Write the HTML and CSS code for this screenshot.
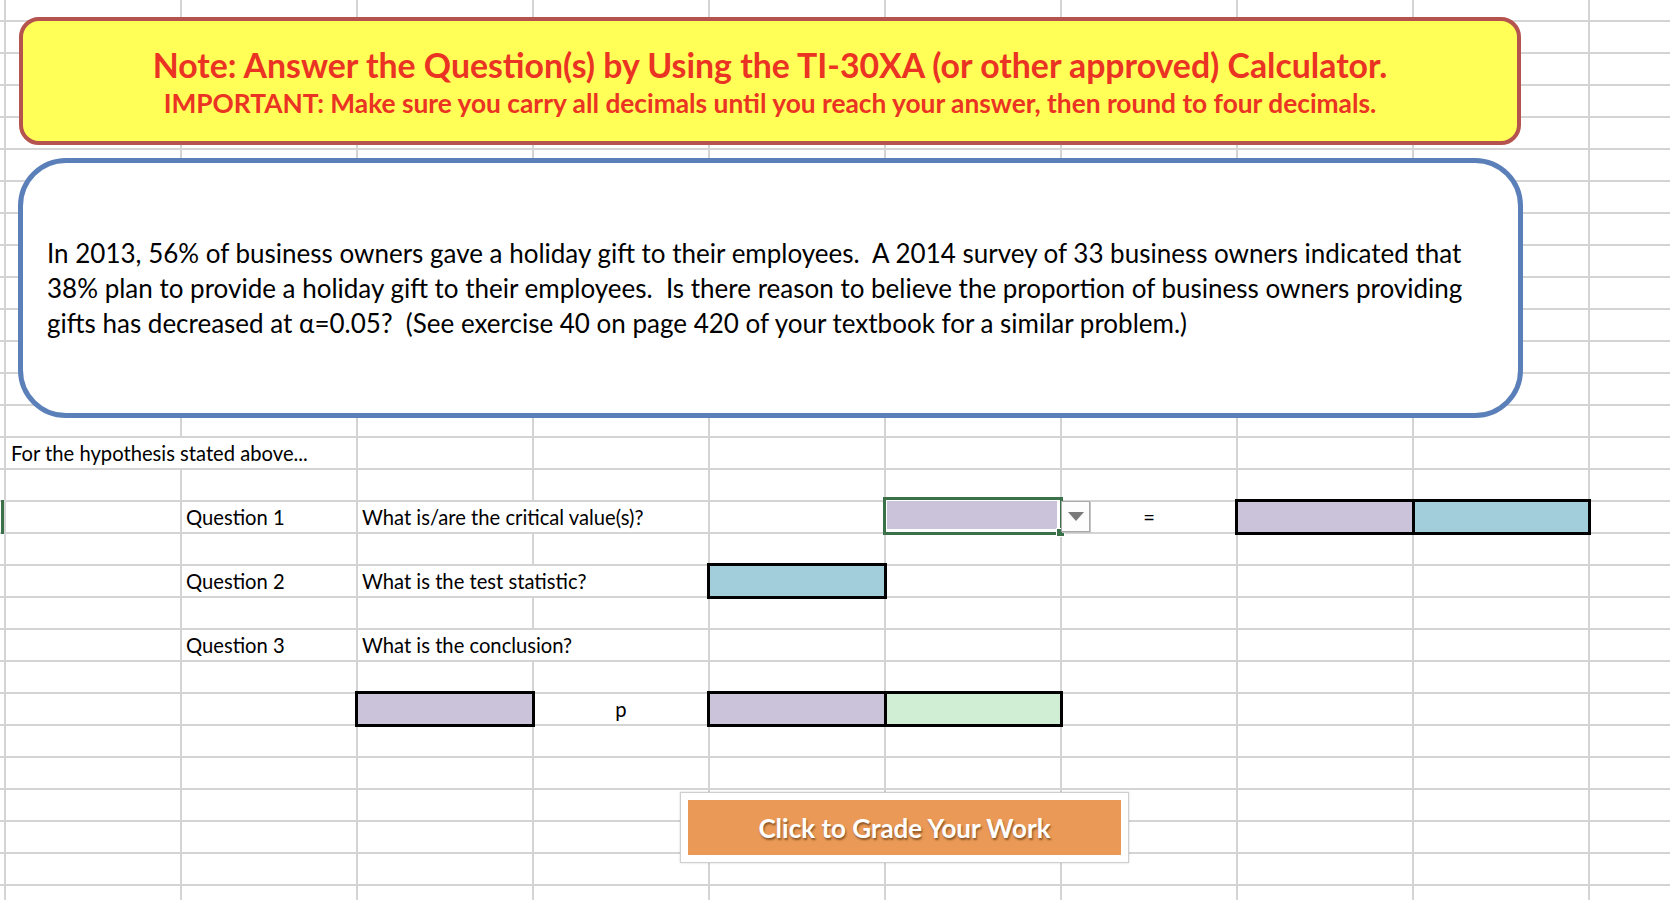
FILE: index.html
```html
<!DOCTYPE html>
<html lang="en">
<head>
<meta charset="utf-8">
<title>Hypothesis Test Worksheet</title>
<link rel="stylesheet" href="styles.css">
</head>
<body>
<div class="sheet">
  <div class="cells">
    <div class="cell wide r14 c1">For the hypothesis stated above...</div>

    <div class="cell r16 c2">Question 1</div>
    <div class="cell wide r16 c3">What is/are the critical value(s)?</div>
    <div class="selected r16 c6">
      <div class="fill purple"></div>
      <div class="handle"></div>
      <div class="dropdown"><span class="arrow"></span></div>
    </div>
    <div class="cell center r16 c7">=</div>
    <div class="boxed pair r16 c8">
      <div class="part purple"></div>
      <div class="part blue"></div>
    </div>

    <div class="cell r18 c2">Question 2</div>
    <div class="cell wide r18 c3">What is the test statistic?</div>
    <div class="boxed blue r18 c5"></div>

    <div class="cell r20 c2">Question 3</div>
    <div class="cell wide r20 c3">What is the conclusion?</div>

    <div class="boxed purple r22 c3"></div>
    <div class="cell center r22 c4">p</div>
    <div class="boxed pair r22 c5">
      <div class="part purple"></div>
      <div class="part green"></div>
    </div>
  </div>

  <div class="row-marker"></div>

  <div class="note">
    <p class="note-title">Note: Answer the Question(s) by Using the TI-30XA (or other approved) Calculator.</p>
    <p class="note-sub">IMPORTANT: Make sure you carry all decimals until you reach your answer, then round to four decimals.</p>
  </div>

  <div class="problem">
    <p>In 2013, 56% of business owners gave a holiday gift to their employees.&nbsp; A 2014 survey of 33 business owners indicated that<br>38% plan to provide a holiday gift to their employees.&nbsp; Is there reason to believe the proportion of business owners providing<br>gifts has decreased at α=0.05?&nbsp; (See exercise 40 on page 420 of your textbook for a similar problem.)</p>
  </div>

  <div class="grade-frame">
    <div class="grade-button">Click to Grade Your Work</div>
  </div>
</div>
</body>
</html>
```

FILE: styles.css
```css
html, body {
  margin: 0;
  padding: 0;
  background: #ffffff;
}

.sheet {
  position: relative;
  width: 1670px;
  height: 900px;
  overflow: hidden;
  font-family: Lato, "Open Sans", sans-serif;
  color: #000;
  background-color: #fff;
  background-image:
    linear-gradient(to right, #d4d4d4 2px, transparent 2px),
    linear-gradient(to bottom, #d4d4d4 2px, transparent 2px);
  background-size: 176px 32px;
  background-position: 4px 20px;
}

/* spreadsheet cell grid */
.cells {
  display: grid;
  padding: 20px 0 0 4px;
  grid-template-columns: repeat(9, 176px) 1fr;
  grid-auto-rows: 32px;
}

.r14 { grid-row: 14; }
.r16 { grid-row: 16; }
.r18 { grid-row: 18; }
.r20 { grid-row: 20; }
.r22 { grid-row: 22; }

.c1 { grid-column: 1; }
.c2 { grid-column: 2; }
.c3 { grid-column: 3; }
.c4 { grid-column: 4; }
.c5 { grid-column: 5; }
.c6 { grid-column: 6; }
.c7 { grid-column: 7; }
.c8 { grid-column: 8; }

.cell {
  margin: 2px 0 0 2px;
  padding-left: 4px;
  font-size: 20.2px;
  line-height: 30px;
  white-space: nowrap;
}

.cell.wide {
  grid-column-end: span 2;
  background: #fff;
}

.cell.c1 { padding-left: 5px; }

.cell.center {
  padding-left: 0;
  text-align: center;
}

.purple { background: #cbc3da; }
.blue { background: #a2cddb; }
.green { background: #d0eed3; }

.boxed {
  margin: -1px -3px -3px -1px;
  border: 3px solid #000;
}

.boxed.pair {
  grid-column-end: span 2;
  display: flex;
}

.pair .part {
  flex: 1;
}

.pair .part:first-child {
  flex: 0 0 174px;
}

.pair .part + .part {
  border-left: 3px solid #000;
}

/* active cell with data-validation dropdown */
.selected {
  position: relative;
  margin: -3px -3px -3px -1px;
  border: 3px solid #3a7148;
  padding: 1px 3px 3px 1px;
  background: #fff;
  display: flex;
}

.selected .fill {
  flex: 1;
}

.handle {
  position: absolute;
  right: -5px;
  bottom: -5px;
  width: 7px;
  height: 7px;
  background: #3a7148;
  border: 1px solid #fff;
}

.dropdown {
  position: absolute;
  left: 175px;
  top: 1px;
  width: 29px;
  height: 31px;
  box-sizing: border-box;
  border: 1px solid #a9a9a9;
  background: #fdfdfd;
  box-shadow: 1px 1px 0 #c4c4c4;
  display: flex;
  align-items: center;
  justify-content: center;
}

.arrow {
  width: 0;
  height: 0;
  border-left: 8px solid transparent;
  border-right: 8px solid transparent;
  border-top: 9px solid #7a7a7a;
}

.row-marker {
  position: absolute;
  left: 1px;
  top: 500px;
  width: 3px;
  height: 34px;
  background: #3a7148;
}

/* floating shapes */
.note {
  position: absolute;
  left: 19px;
  top: 17px;
  width: 1502px;
  height: 128px;
  box-sizing: border-box;
  border: 4px solid #b5534f;
  border-radius: 20px;
  background: #ffff57;
  color: #ea3323;
  font-weight: 700;
  text-align: center;
  padding-top: 24px;
}

.note p {
  margin: 0;
  white-space: nowrap;
}

.note-title {
  font-size: 33.8px;
  line-height: 40px;
}

.note-sub {
  font-size: 26.3px;
  line-height: 36px;
}

.problem {
  position: absolute;
  left: 18px;
  top: 158px;
  width: 1505px;
  height: 260px;
  box-sizing: border-box;
  border: 5px solid #5b80b9;
  border-radius: 48px;
  background: #fff;
  display: flex;
  align-items: center;
  padding-left: 24px;
}

.problem p {
  margin: 0;
  font-size: 26px;
  line-height: 35px;
  white-space: nowrap;
}

.grade-frame {
  position: absolute;
  left: 680px;
  top: 792px;
  width: 449px;
  height: 71px;
  box-sizing: border-box;
  padding: 7px;
  background: #fff;
  border: 1px solid #cfcfcf;
  box-shadow: 0 0 2px rgba(0, 0, 0, 0.18);
  display: flex;
}

.grade-button {
  flex: 1;
  background: #ea9a56;
  color: #fff;
  font-weight: 700;
  font-size: 26px;
  display: flex;
  align-items: center;
  justify-content: center;
  text-shadow: 1px 2px 2px rgba(60, 30, 0, 0.55);
}
```
